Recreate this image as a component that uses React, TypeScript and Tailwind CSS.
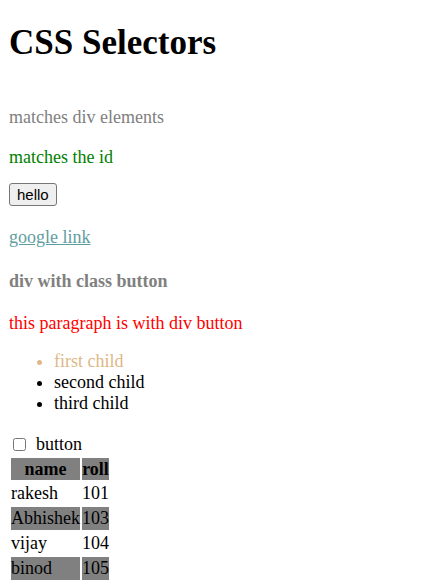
export default function App() {
  const rows = [
    { name: 'rakesh', roll: '101', shaded: false },
    { name: 'Abhishek', roll: '103', shaded: true },
    { name: 'vijay', roll: '104', shaded: false },
    { name: 'binod', roll: '105', shaded: true },
  ];

  return (
    <div className="min-h-screen bg-white px-[9px] pt-[22px] text-[18px] text-black font-['Liberation_Serif','Times_New_Roman',serif]">
      <h1 className="text-[35px] font-bold leading-[41px]">CSS Selectors</h1>

      <div className="mt-[44px] leading-[21px] text-[#808080]">matches div elements</div>

      <p className="mt-[19px] leading-[21px] text-[#008000]">matches the id</p>

      <div className="mt-[15px] flex">
        <button className="h-[23px] rounded-[3px] border border-[#767676] bg-[#efefef] px-[7px] text-[15px] leading-[19px] text-black font-['Liberation_Sans',Arial,sans-serif]">
          hello
        </button>
      </div>

      <p className="mt-[21px] leading-[21px]">
        <a href="#" className="text-[#5f9ea0] underline">google link</a>
      </p>

      <div className="mt-[23px] leading-[21px] font-bold text-[#808080]">div with class button</div>

      <p className="mt-[21px] leading-[21px] text-[#ff0000]">this paragraph is with div button</p>

      <ul className="mt-[17px] list-disc pl-[45px] leading-[21px]">
        <li className="text-[#deb887]">first child</li>
        <li>second child</li>
        <li>third child</li>
      </ul>

      <label className="mt-[20px] flex items-center leading-[21px]">
        <input type="checkbox" className="ml-[4px] mr-[10px] h-[13px] w-[13px]" />
        button
      </label>

      <table className="mt-[1px] border-separate border-spacing-[2px]">
        <thead>
          <tr>
            <th className="bg-[#808080] px-0 py-[1px] leading-[20px]">name</th>
            <th className="bg-[#808080] px-0 py-[1px] leading-[20px]">roll</th>
          </tr>
        </thead>
        <tbody>
          {rows.map((r) => (
            <tr key={r.name}>
              <td className={`${r.shaded ? 'bg-[#808080]' : ''} px-0 py-[1px] leading-[21px]`}>{r.name}</td>
              <td className={`${r.shaded ? 'bg-[#808080]' : ''} px-0 py-[1px] leading-[21px]`}>{r.roll}</td>
            </tr>
          ))}
        </tbody>
      </table>
    </div>
  );
}
